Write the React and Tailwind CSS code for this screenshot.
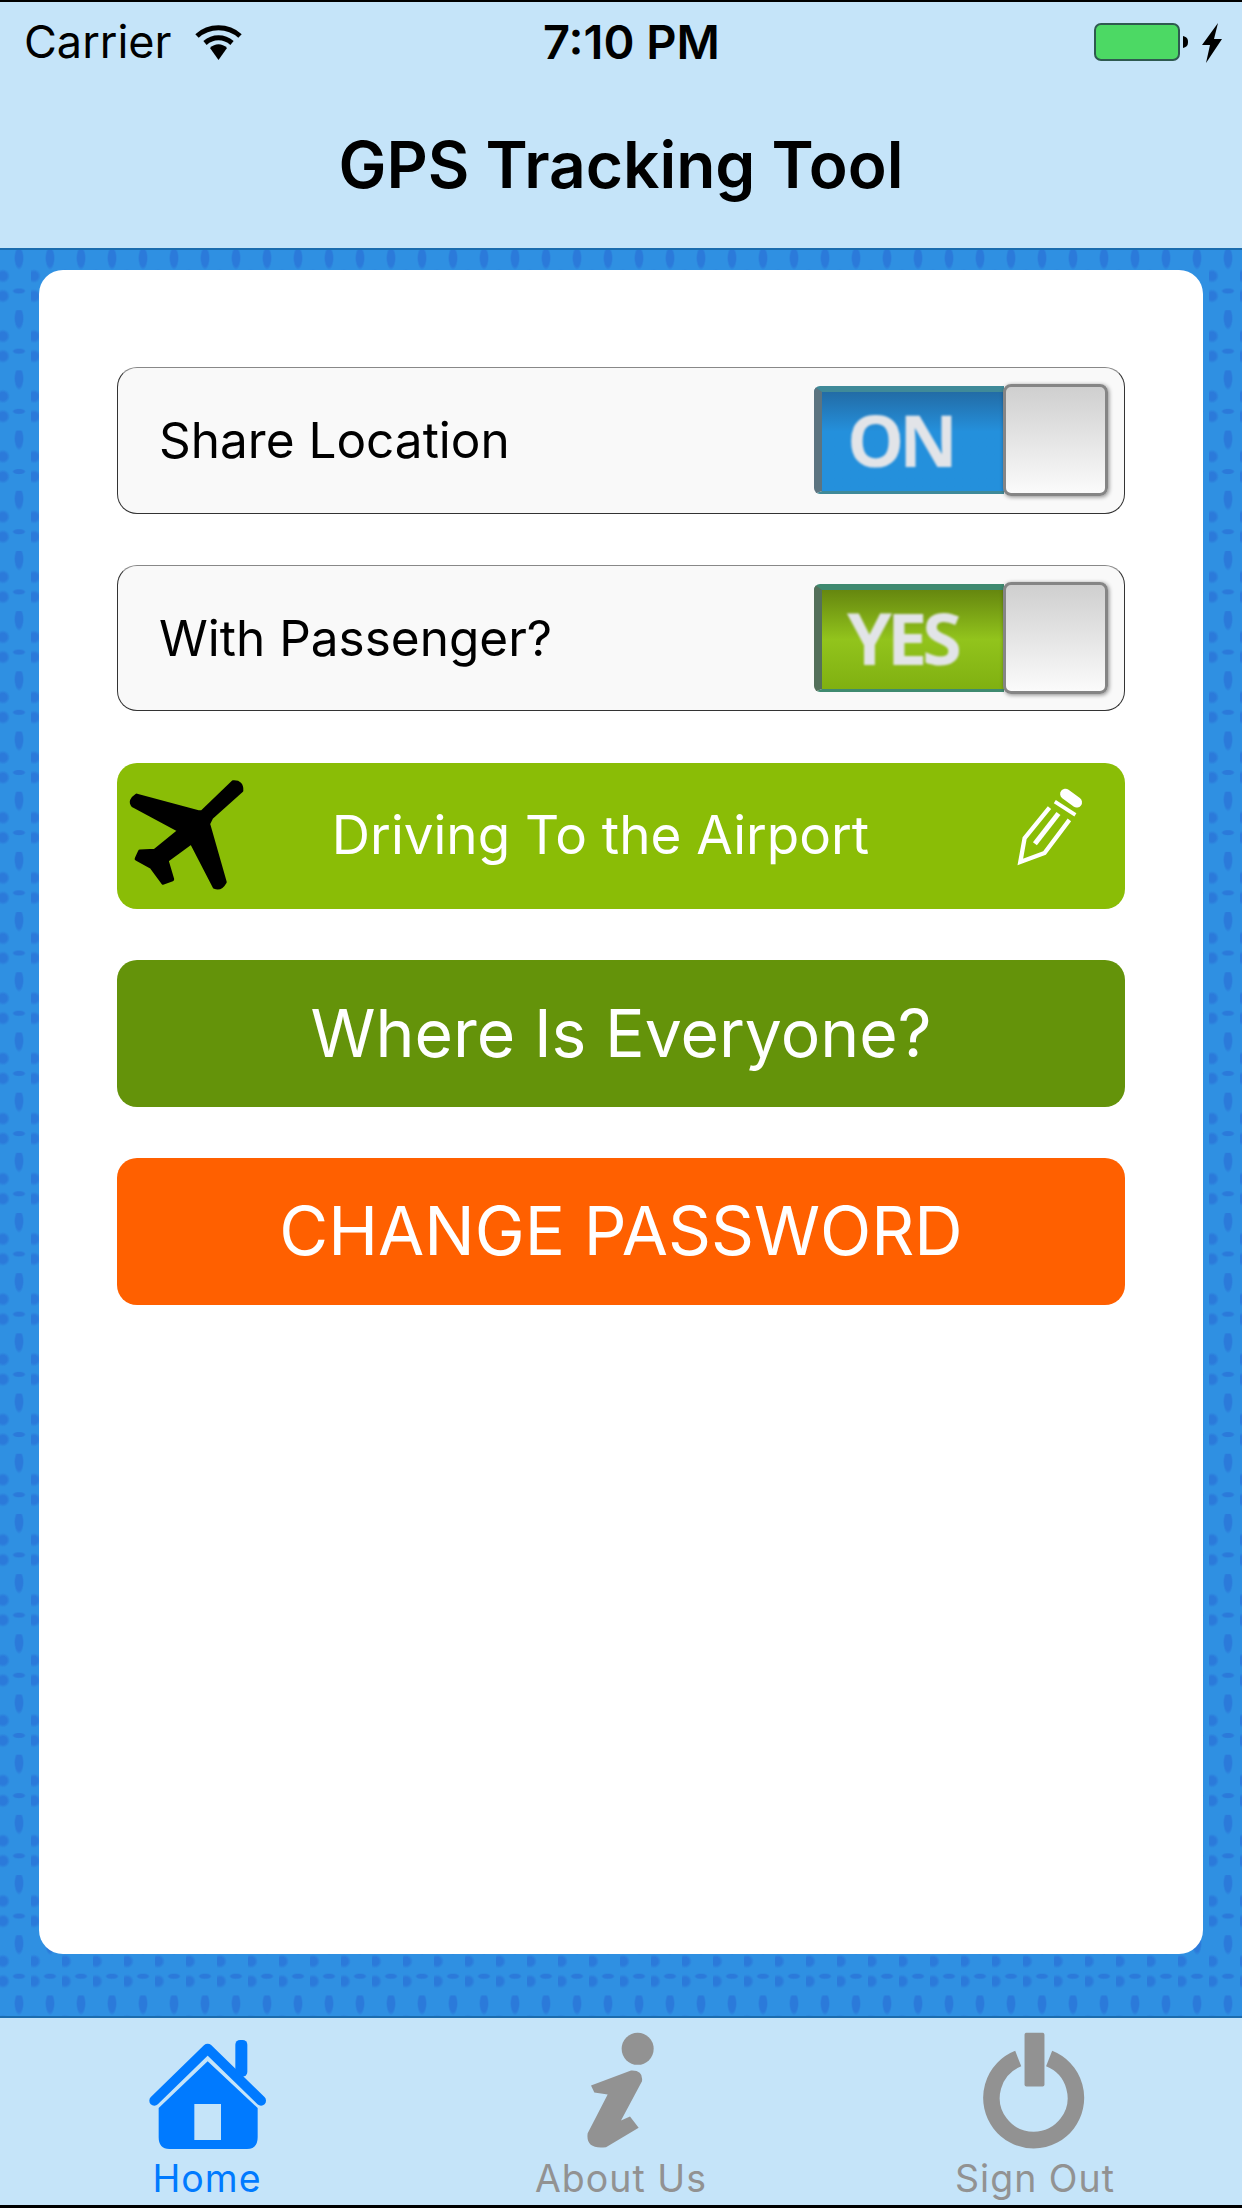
import React from "react";

const sans = "font-['Inter','Noto_Sans',sans-serif]";

function WifiIcon() {
  return (
    <svg viewBox="0 0 49 36" className="w-[49px] h-[36px]">
      <path d="M3 12 C15 1 34 1 46 12" fill="none" stroke="#000" strokeWidth="5" />
      <path d="M11 19 C19 12 30 12 38 19" fill="none" stroke="#000" strokeWidth="5" />
      <path d="M16 24 C21 19 28 19 33 24 L24.5 36 Z" fill="#000" />
    </svg>
  );
}

function BatteryIcon() {
  return (
    <svg viewBox="0 0 132 40" className="w-[132px] h-[40px]">
      <rect x="1" y="1" width="84" height="36" rx="6" fill="#4cd964" stroke="#2f5a50" strokeWidth="2" />
      <path d="M89 13 C93 14 94 16 94 19 C94 22 93 24 89 25 Z" fill="#000" />
      <path d="M124 0 L108 22 L116 22 L112 40 L128 16 L120 16 Z" fill="#000" />
    </svg>
  );
}

function Toggle({ label, trackClass }) {
  return (
    <div className="flex items-center">
      <div
        className={`w-[190px] h-[108px] rounded-l-[6px] flex items-center pl-[25px] border-t-[6px] border-l-[8px] border-b-[3px] ${trackClass}`}
      >
        <span className="font-['Open_Sans',sans-serif] font-bold text-[72px] leading-none tracking-[-5px] mb-[6px] text-[#e2e4e8] blur-[1.2px]">
          {label}
        </span>
      </div>
      <div className="w-[105px] h-[112px] -ml-px rounded-[8px] border-[3px] border-[#858585] bg-gradient-to-b from-[#cfcfcf] to-[#fbfbfb] shadow-[1px_1px_4px_rgba(0,0,0,0.45)]"></div>
    </div>
  );
}

function ToggleRow({ text, label, trackClass }) {
  return (
    <div className="h-[146.5px] rounded-[20px] border border-[#333] border-t-[#888] bg-[#f9f9f9] flex items-center justify-between pl-[41px] pr-[16px]">
      <span className="text-[49.5px] text-black">{text}</span>
      <Toggle label={label} trackClass={trackClass} />
    </div>
  );
}

function PlaneIcon() {
  return (
    <svg viewBox="90 80 350 340" className="w-[117px] h-[113px] shrink-0 overflow-visible">
      <path
        d="M405 90 Q432 88 430 115 L340 195 L330 215 L380 390 Q368 412 350 405 L280 270 L205 325 L222 382 L195 392 L160 345 L115 320 L125 298 L170 296 L245 235 L105 160 Q92 145 115 130 L300 180 L312 180 Z"
        fill="#000"
        stroke="#000"
        strokeWidth="12"
        strokeLinejoin="round"
      />
    </svg>
  );
}

function PencilIcon() {
  return (
    <svg viewBox="160 110 220 250" className="w-[73px] h-[83px] shrink-0 mb-[18px]" fill="none" stroke="#fff">
      <path d="M318 137 L352 162" strokeWidth="32" strokeLinecap="round" />
      <path d="M286 160 L348 200" strokeWidth="11" />
      <path d="M270 178 L195 270 L182 342 L255 315 L330 215" strokeWidth="13" />
      <path d="M297 196 L226 287" strokeWidth="15" />
    </svg>
  );
}

function HomeIcon() {
  return (
    <svg viewBox="80 55 360 330" className="w-[120px] h-[110px]">
      <path d="M102 240 L262 84 L422 240" fill="none" stroke="#007aff" strokeWidth="30" strokeLinecap="round" strokeLinejoin="round" />
      <rect x="345" y="58" width="36" height="110" rx="14" fill="#007aff" />
      <path
        fillRule="evenodd"
        d="M115 262 L262 122 L412 262 L412 350 Q412 385 380 385 L147 385 Q115 385 115 350 Z M222 250 L222 358 L302 358 L302 250 Z"
        fill="#007aff"
      />
    </svg>
  );
}

function InfoIcon() {
  return (
    <svg viewBox="130 35 210 350" className="w-[70px] h-[117px]">
      <circle cx="285" cy="85" r="48" fill="#929292" />
      <path
        d="M145 195 L265 150 Q302 148 298 182 L235 300 L262 288 L288 322 L190 380 Q128 388 135 338 L195 222 L155 216 Z"
        fill="#929292"
      />
    </svg>
  );
}

function PowerIcon() {
  return (
    <svg viewBox="110 35 325 350" className="w-[108px] h-[117px]">
      <path d="M222 114 A127 127 0 1 0 315 114" fill="none" stroke="#929292" strokeWidth="50" />
      <rect x="241" y="36" width="60" height="162" rx="6" fill="#929292" />
    </svg>
  );
}

function Tab({ icon, label, active }) {
  return (
    <div className="flex-1 flex flex-col items-center">
      <div className="h-[117px] flex items-end">{icon}</div>
      <span className={`text-[37.5px] tracking-[1px] leading-[44px] mt-[8px] ${active ? "text-[#007aff]" : "text-[#929292]"}`}>
        {label}
      </span>
    </div>
  );
}

export default function App() {
  return (
    <div className={`w-[1242px] h-[2208px] flex flex-col bg-black pt-[2px] pb-[3px] ${sans}`}>
      <header className="h-[248px] shrink-0 bg-[#c5e4f9] border-b-2 border-[#1b6cae] flex flex-col">
        <div className="h-[80px] pl-[24px] pr-[16px] pt-[16px] grid grid-cols-3 items-start">
          <div className="flex items-center gap-[22px]">
            <span className="text-[45px] leading-[48px] text-black">Carrier</span>
            <WifiIcon />
          </div>
          <div className="text-[47px] leading-[48px] font-semibold text-black text-center ml-[13px]">7:10 PM</div>
          <div className="flex justify-end pt-[5px]">
            <BatteryIcon />
          </div>
        </div>
        <h1 className="text-center text-[64px] leading-[72px] font-semibold text-black mt-[47px]">GPS Tracking Tool</h1>
      </header>

      <main className="flex-1 bg-[#2f90e2] bg-[radial-gradient(ellipse_5px_12px_at_19px_8px,#2b7ada_70%,transparent_100%),radial-gradient(circle_at_3px_26px,#2b7ada_4px,transparent_7px),radial-gradient(ellipse_7px_3px_at_19px_41px,#2b7ada_70%,transparent_100%),radial-gradient(circle_at_3px_46px,#2b7ada_4px,transparent_7px)] bg-[size:31px_60.2px] px-[39px] pt-[20px] pb-[62px]">
        <div className="h-full bg-white rounded-[24px] px-[78px] pt-[97px] flex flex-col gap-[51.25px]">
          <ToggleRow
            text="Share Location"
            label="ON"
            trackClass="bg-gradient-to-b from-[#226ca6] via-[#2490dc] via-40% to-[#2490dc] border-[#3f8a99] border-l-[#5c7480]"
          />
          <ToggleRow
            text="With Passenger?"
            label="YES"
            trackClass="bg-gradient-to-b from-[#66870f] via-[#92c41c] to-[#80b011] border-[#3f8a70] border-l-[#54705a]"
          />
          <div className="h-[146.5px] rounded-[20px] bg-[#8abd06] flex items-center pl-[11px] pr-[39px]">
            <PlaneIcon />
            <span className="flex-1 text-center text-[53px] text-white pr-[57px]">Driving To the Airport</span>
            <PencilIcon />
          </div>
          <div className="h-[146.5px] rounded-[20px] bg-[#64930a] flex items-center justify-center text-[66px] text-white">
            Where Is Everyone?
          </div>
          <div className="h-[146.5px] rounded-[20px] bg-[#ff6000] flex items-center justify-center text-[67px] text-white">
            CHANGE PASSWORD
          </div>
        </div>
      </main>

      <nav className="h-[189px] shrink-0 bg-[#c5e4f9] border-t-2 border-[#1b6cae] flex pt-[14px]">
        <Tab icon={<HomeIcon />} label="Home" active />
        <Tab icon={<InfoIcon />} label="About Us" />
        <Tab icon={<PowerIcon />} label="Sign Out" />
      </nav>
    </div>
  );
}
